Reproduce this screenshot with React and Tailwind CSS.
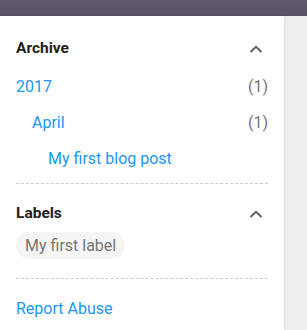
const Chevron = () => (
  <svg width="14" height="8" viewBox="0 0 14 8" className="text-[#616161]">
    <path d="M1.5 7L7 1.8 12.5 7" fill="none" stroke="currentColor" strokeWidth="2" />
  </svg>
);

const Divider = () => <div className="border-t border-dashed border-[#cccccc]" />;

const App = () => {
  return (
    <div className="w-[307px] h-[330px] overflow-hidden bg-[#eeeeee] font-['Roboto',sans-serif]">
      {/* top bar */}
      <div className="h-4 bg-gradient-to-b from-[#615b6d] to-[#575163]" />
      <div className="flex h-[314px]">
        <div className="w-[284px] bg-white pl-4 pr-4 shadow-[1px_0_2px_rgba(0,0,0,0.08)]">
          {/* Archive */}
          <div className="flex items-center justify-between h-[26px] mt-[20px] pr-[5px]">
            <span className="text-[15.5px] font-bold text-[#212121]">Archive</span>
            <Chevron />
          </div>
          <div className="flex items-center justify-between h-[36px] mt-[7px] text-[16px]">
            <span className="text-[#2196f3]">2017</span>
            <span className="text-[#757575]">(1)</span>
          </div>
          <div className="flex items-center justify-between h-[36px] pl-4 text-[16px]">
            <span className="text-[#2196f3]">April</span>
            <span className="text-[#757575]">(1)</span>
          </div>
          <div className="flex items-center h-[36px] pl-8 text-[16px]">
            <span className="text-[#2196f3]">My first blog post</span>
          </div>
          <div className="mt-[6px]">
            <Divider />
          </div>
          {/* Labels */}
          <div className="flex items-center justify-between h-[26px] mt-[17px] pr-[5px]">
            <span className="text-[15.5px] font-bold text-[#212121]">Labels</span>
            <Chevron />
          </div>
          <div className="mt-[5px]">
            <span className="inline-flex items-center h-[27px] px-[9px] rounded-full bg-[#f5f5f5] text-[16px] text-[#757575]">
              My first label
            </span>
          </div>
          <div className="mt-[19px]">
            <Divider />
          </div>
          <div className="mt-[18px] text-[16px] text-[#2196f3]">Report Abuse</div>
        </div>
        <div className="flex-1" />
      </div>
    </div>
  );
};

export default App;
